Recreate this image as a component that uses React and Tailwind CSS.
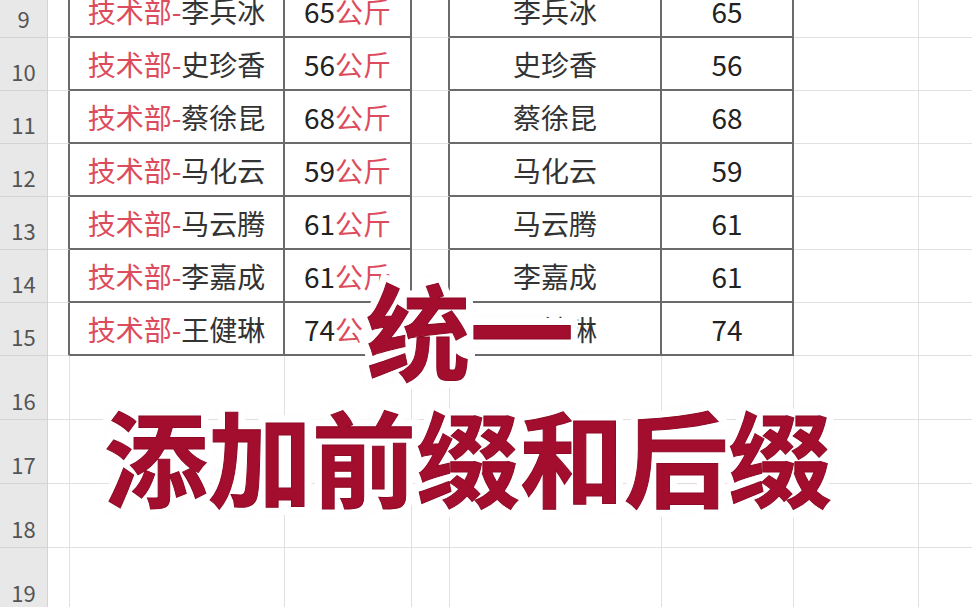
const rows = [
  { n: 9, name: '李兵冰', kg: 65 },
  { n: 10, name: '史珍香', kg: 56 },
  { n: 11, name: '蔡徐昆', kg: 68 },
  { n: 12, name: '马化云', kg: 59 },
  { n: 13, name: '马云腾', kg: 61 },
  { n: 14, name: '李嘉成', kg: 61 },
  { n: 15, name: '王健琳', kg: 74 },
];

const emptyRows = [16, 17, 18, 19];

const font = { fontFamily: '"Noto Sans CJK SC", "Noto Sans", sans-serif' };

const TableRow = ({ row }) => (
  <div className="flex h-[53px] shrink-0">
    <div className="flex w-[48px] shrink-0 items-end justify-center border-r border-b border-[#d4d4d4] bg-[#e8e8e8] pb-[8px] text-[22px] leading-none text-[#555]">
      {row.n}
    </div>
    <div className="w-[22px] shrink-0 border-r-2 border-b border-r-[#6a6a6a] border-b-[#e3e0e1]" />
    <div className="flex w-[215px] shrink-0 items-center justify-center border-r-2 border-b-2 border-[#6a6a6a] text-[28px] leading-none">
      <span className="text-[#dc4c5c]">技术部-</span>
      <span className="text-[#333]">{row.name}</span>
    </div>
    <div className="flex w-[127px] shrink-0 items-center justify-center border-r-2 border-b-2 border-[#6a6a6a] text-[28px] leading-none">
      <span className="text-[#222]">{row.kg}</span>
      <span className="text-[#dc4c5c]">公斤</span>
    </div>
    <div className="w-[38px] shrink-0 border-r-2 border-b border-r-[#6a6a6a] border-b-[#e3e0e1]" />
    <div className="flex w-[212px] shrink-0 items-center justify-center border-r-2 border-b-2 border-[#6a6a6a] text-[28px] leading-none text-[#333]">
      {row.name}
    </div>
    <div className="flex w-[132px] shrink-0 items-center justify-center border-r-2 border-b-2 border-[#6a6a6a] text-[28px] leading-none text-[#222]">
      {row.kg}
    </div>
    <div className="w-[125px] shrink-0 border-r border-b border-[#e3e0e1]" />
    <div className="w-[80px] shrink-0 border-b border-[#e3e0e1]" />
  </div>
);

const EmptyRow = ({ n }) => (
  <div className="flex h-[64px] shrink-0">
    <div className="flex w-[48px] shrink-0 items-end justify-center border-r border-b border-[#d4d4d4] bg-[#e8e8e8] pb-[8px] text-[22px] leading-none text-[#555]">
      {n}
    </div>
    {[22, 215, 127, 38, 212, 132, 125].map((w, i) => (
      <div key={i} style={{ width: w }} className="shrink-0 border-r border-b border-[#e3e0e1]" />
    ))}
    <div className="w-[80px] shrink-0 border-b border-[#e3e0e1]" />
  </div>
);

// white outline layer behind the red fill
const Outlined = ({ children, className }) => (
  <div className={`grid ${className}`}>
    <span className="[grid-area:1/1] text-white [-webkit-text-stroke:15px_#ffffff] [text-shadow:0_0_10px_rgba(240,150,170,0.55)]">
      {children}
    </span>
    <span className="[grid-area:1/1] text-[#a30d2e] [-webkit-text-stroke:1px_#8e0a26]">{children}</span>
  </div>
);

export default function App() {
  return (
    <div className="relative h-[607px] w-[972px] overflow-hidden bg-white" style={font}>
      <div className="-mt-[15px] flex flex-col">
        {rows.map((row) => (
          <TableRow key={row.n} row={row} />
        ))}
        {emptyRows.map((n) => (
          <EmptyRow key={n} n={n} />
        ))}
      </div>

      <div className="absolute left-[104px] top-[276px] flex flex-col text-[104px] font-bold leading-none">
        <Outlined className="ml-[262px] w-max">统一</Outlined>
        <Outlined className="mt-[23px] w-max">添加前缀和后缀</Outlined>
      </div>
    </div>
  );
}
